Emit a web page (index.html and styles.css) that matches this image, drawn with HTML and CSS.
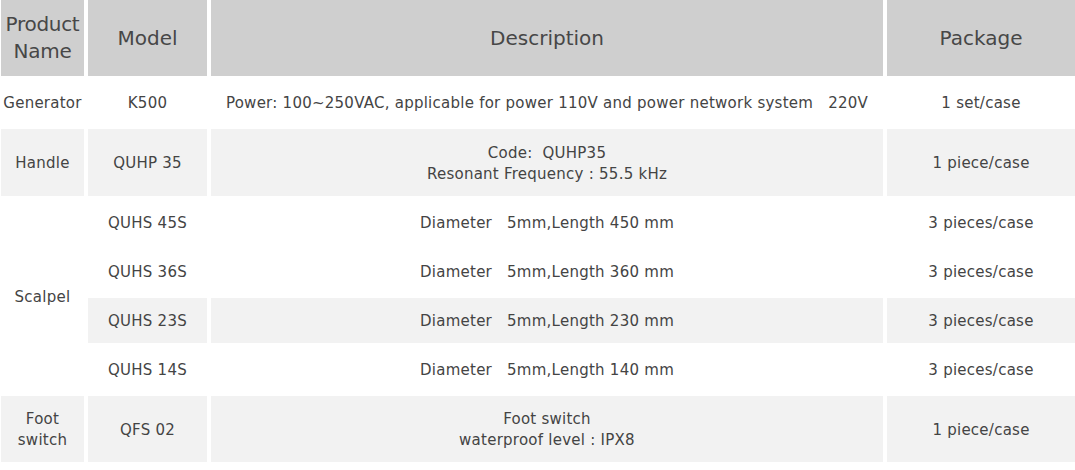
FILE: index.html
```html
<!DOCTYPE html>
<html>
<head>
<meta charset="utf-8">
<link rel="stylesheet" href="styles.css">
</head>
<body>
<table class="spec">
  <colgroup>
    <col class="c-name"><col class="c-model"><col class="c-desc"><col class="c-pack">
  </colgroup>
  <thead>
    <tr class="head">
      <th class="tight">Product<br>Name</th>
      <th>Model</th>
      <th>Description</th>
      <th>Package</th>
    </tr>
  </thead>
  <tbody>
    <tr class="row">
      <td>Generator</td>
      <td>K500</td>
      <td>Power: 100~250VAC, applicable for power 110V and power network system &nbsp; 220V</td>
      <td>1 set/case</td>
    </tr>
    <tr class="row tall shade">
      <td>Handle</td>
      <td>QUHP 35</td>
      <td>Code:&nbsp; QUHP35<br>Resonant Frequency : 55.5 kHz</td>
      <td>1 piece/case</td>
    </tr>
    <tr class="row">
      <td rowspan="4" class="plain">Scalpel</td>
      <td>QUHS 45S</td>
      <td>Diameter &nbsp; 5mm,Length 450 mm</td>
      <td>3 pieces/case</td>
    </tr>
    <tr class="row">
      <td>QUHS 36S</td>
      <td>Diameter &nbsp; 5mm,Length 360 mm</td>
      <td>3 pieces/case</td>
    </tr>
    <tr class="row shade">
      <td>QUHS 23S</td>
      <td>Diameter &nbsp; 5mm,Length 230 mm</td>
      <td>3 pieces/case</td>
    </tr>
    <tr class="row">
      <td>QUHS 14S</td>
      <td>Diameter &nbsp; 5mm,Length 140 mm</td>
      <td>3 pieces/case</td>
    </tr>
    <tr class="row tall2 shade">
      <td>Foot<br>switch</td>
      <td>QFS 02</td>
      <td>Foot switch<br>waterproof level : IPX8</td>
      <td>1 piece/case</td>
    </tr>
  </tbody>
</table>
</body>
</html>
```

FILE: styles.css
```css
html, body {
  margin: 0;
  padding: 0;
  background: #ffffff;
  overflow: hidden;
}

body {
  font-family: "DejaVu Sans", "Open Sans", sans-serif;
  color: #444444;
}

.spec {
  border-collapse: separate;
  border-spacing: 4px;
  table-layout: fixed;
  width: 1082px;
  margin: -4px 0 0 -3px;
}

.c-name { width: 83px; }
.c-model { width: 119px; }
.c-desc { width: 672px; }
.c-pack { width: 188px; }

.head th {
  height: 76px;
  padding: 0;
  background: #cfcfcf;
  font-weight: 400;
  font-size: 20px;
  line-height: 27px;
  color: #474747;
  text-align: center;
  vertical-align: middle;
}

.head th.tight {
  letter-spacing: -0.3px;
}

.row td {
  height: 43px;
  padding: 2px 0 0;
  font-size: 15px;
  letter-spacing: 0.25px;
  line-height: 21px;
  text-align: center;
  vertical-align: middle;
  white-space: nowrap;
}

.row.tall td { height: 65px; }
.row.tall2 td { height: 64px; }

.row.shade td { background: #f2f2f2; }
.row.shade td.plain { background: #ffffff; }
.row td.plain { background: #ffffff; }
```
